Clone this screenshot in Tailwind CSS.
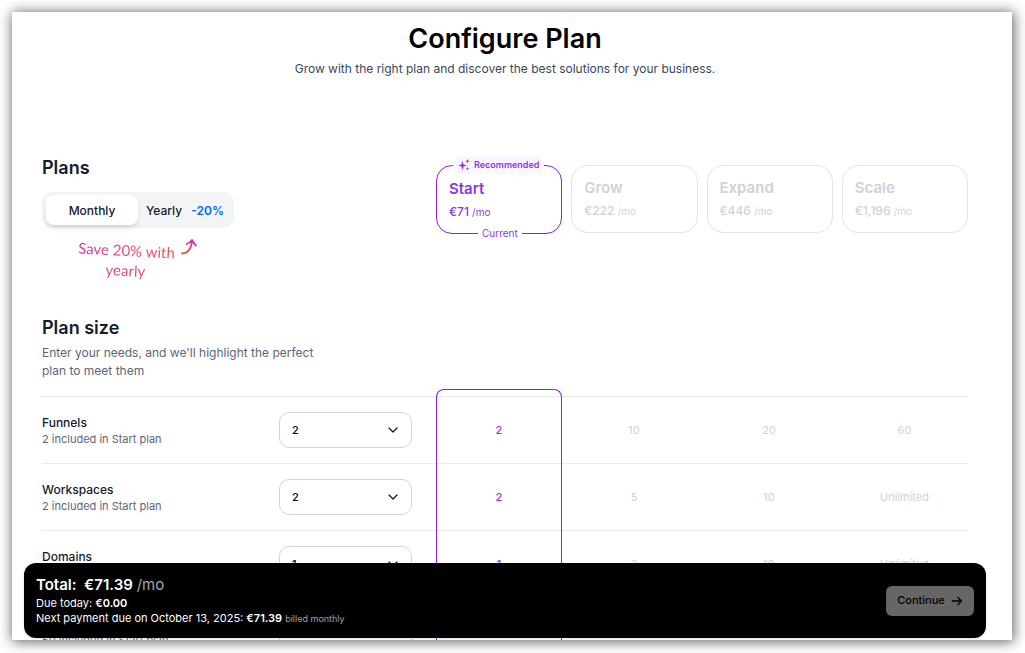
<!DOCTYPE html>
<html lang="en">
<head>
<meta charset="utf-8">
<meta name="viewport" content="width=device-width, initial-scale=1">
<title>Configure Plan</title>
<script src="https://cdn.jsdelivr.net/npm/@tailwindcss/browser@4"></script>
</head>
<body class="h-screen bg-white pt-3 pl-3 pr-[13px] pb-[13px] font-['Inter',sans-serif] text-[#141b2d]">
<div class="relative h-full overflow-hidden bg-white shadow-[1px_1px_12px_1px_rgba(0,0,0,0.6)]">
  <main class="pt-[9px] pl-[30px] pr-[44px]">
    <header class="text-center">
      <h1 class="text-[27px] leading-9 font-semibold text-black">Configure Plan</h1>
      <p class="mt-0.5 text-[12px] leading-5 text-[#3b4758]">Grow with the right plan and discover the best solutions for your business.</p>
    </header>

    <section class="mt-[75px] flex justify-between">
      <div>
        <h2 class="text-lg leading-7 font-semibold">Plans</h2>
        <div class="mt-[10px] flex h-9 w-48 items-center rounded-[10px] bg-[#f2f4f6] p-1">
          <button type="button" aria-pressed="true" class="h-[30px] w-[92px] rounded-lg bg-white pt-0.5 text-[12px] font-medium shadow-md shadow-black/10">Monthly</button>
          <button type="button" aria-pressed="false" class="flex flex-1 items-center justify-between pt-0.5 pr-1.5 pl-2 text-[12px] font-medium">Yearly <span class="font-semibold text-[#0068ff]">-20%</span></button>
        </div>
        <div class="mt-2 ml-8 flex">
          <p class="mt-1 w-[104px] rotate-3 bg-linear-to-r from-[#d42fb4] to-[#f9502f] bg-clip-text text-center font-['Lato',sans-serif] text-[15px] leading-5 text-transparent">Save 20% with yearly</p>
          <svg class="mt-0.5 ml-0.5 h-[18px] w-[18px]" viewBox="0 0 18 18" fill="none" stroke="url(#hint)" stroke-width="1.8" stroke-linecap="round" stroke-linejoin="round" aria-hidden="true">
            <defs><linearGradient id="hint" gradientUnits="userSpaceOnUse" x1="12" y1="1" x2="9" y2="14"><stop stop-color="#bd35c6"/><stop offset="1" stop-color="#f9502f"/></linearGradient></defs>
            <path d="M2 15.500C8 15 11.500 10 12 2.500M6.500 6C8.500 5.500 10.500 4 12 2C13 4 14.300 6 16 7.500"/>
          </svg>
        </div>
      </div>

      <div class="grid w-[532px] grid-cols-4 gap-[9px] pt-[11px] text-left">
        <button type="button" aria-pressed="true" class="relative flex h-[69px] flex-col rounded-2xl border border-[#8a1cf5] px-3 pt-[13px] text-left text-[#8e35ea]">
          <span class="absolute -top-[9px] left-[17px] flex h-4 items-center gap-1 rounded-full bg-[#faf5ff] px-1 text-[9px] font-semibold ring-1 ring-[#faf5ff]">
            <svg class="h-3 w-3" viewBox="0 0 12 12" fill="currentColor" aria-hidden="true"><path d="M4.500 2L5.600 5.400L9 6.500L5.600 7.600L4.500 11L3.400 7.600L0 6.500L3.400 5.400ZM9.500 0L10.100 1.600L11.700 2.200L10.100 2.800L9.500 4.400L8.900 2.800L7.300 2.200L8.900 1.600ZM9.500 7.800L10 9.200L11.400 9.700L10 10.200L9.500 11.600L9 10.200L7.600 9.700L9 9.200Z"/></svg>
            Recommended</span>
          <span class="text-[15px] leading-5 font-semibold">Start</span>
          <span class="mt-[3px] text-[12px] leading-5 font-medium">€71 <span class="text-[10px] font-normal">/mo</span></span>
          <span class="absolute -bottom-2 left-[41px] bg-white px-1 text-[10px] leading-4">Current</span>
        </button>
        <button type="button" class="flex h-[68px] flex-col rounded-2xl border border-[#e2e4e8] px-3 pt-3 text-left text-[#ced2d9]">
          <span class="text-[15px] leading-5 font-semibold">Grow</span>
          <span class="mt-[3px] text-[12px] leading-5 font-medium">€222 <span class="text-[10px] font-normal">/mo</span></span>
        </button>
        <button type="button" class="flex h-[68px] flex-col rounded-2xl border border-[#e2e4e8] px-3 pt-3 text-left text-[#ced2d9]">
          <span class="text-[15px] leading-5 font-semibold">Expand</span>
          <span class="mt-[3px] text-[12px] leading-5 font-medium">€446 <span class="text-[10px] font-normal">/mo</span></span>
        </button>
        <button type="button" class="flex h-[68px] flex-col rounded-2xl border border-[#e2e4e8] px-3 pt-3 text-left text-[#ced2d9]">
          <span class="text-[15px] leading-5 font-semibold">Scale</span>
          <span class="mt-[3px] text-[12px] leading-5 font-medium">€1,196 <span class="text-[10px] font-normal">/mo</span></span>
        </button>
      </div>
    </section>

    <section class="mt-[34px]">
      <h2 class="text-lg leading-7 font-semibold">Plan size</h2>
      <p class="mt-0.5 w-[290px] text-[12px] leading-[18px] text-[#5b6676]">Enter your needs, and we'll highlight the perfect plan to meet them</p>

      <div class="relative mt-4">
        <table class="w-full table-fixed border-separate border-spacing-0 text-[11px]">
          <colgroup><col><col class="w-[133px]"><col class="w-[20px]"><col class="w-[135px]"><col class="w-[135px]"><col class="w-[135px]"><col class="w-[131px]"></colgroup>
          <tbody class="text-center text-[#ced2d9] [&>tr>*]:h-[67px] [&>tr>*]:border-t [&>tr>*]:border-[#e8eaed]">
            <tr>
              <th scope="row" class="pt-0.5 text-left font-normal text-[#5b6676]"><label for="funnels" class="block text-[12px] leading-4 font-medium text-[#141b2d]">Funnels</label><span class="block leading-4">2 included in Start plan</span></th>
              <td><div class="relative"><select id="funnels" class="block h-9 w-full appearance-none rounded-[10px] border border-[#d0d4da] bg-white px-3 text-[11px] font-medium text-black"><option>2</option><option>10</option></select><svg class="pointer-events-none absolute top-3 right-[13px] h-3 w-3" viewBox="0 0 12 12" fill="none" stroke="#111" stroke-width="1.200" stroke-linecap="round" stroke-linejoin="round" aria-hidden="true"><path d="M2 4L6 8L10 4"/></svg></div></td>
              <td></td><td class="pr-[5px] pl-1 text-[#8e35ea] font-medium">2</td><td class="pr-[5px] pl-1">10</td><td class="pr-[5px] pl-1">20</td><td class="pl-1">60</td>
            </tr>
            <tr>
              <th scope="row" class="pt-0.5 text-left font-normal text-[#5b6676]"><label for="workspaces" class="block text-[12px] leading-4 font-medium text-[#141b2d]">Workspaces</label><span class="block leading-4">2 included in Start plan</span></th>
              <td><div class="relative"><select id="workspaces" class="block h-9 w-full appearance-none rounded-[10px] border border-[#d0d4da] bg-white px-3 text-[11px] font-medium text-black"><option>2</option><option>5</option></select><svg class="pointer-events-none absolute top-3 right-[13px] h-3 w-3" viewBox="0 0 12 12" fill="none" stroke="#111" stroke-width="1.200" stroke-linecap="round" stroke-linejoin="round" aria-hidden="true"><path d="M2 4L6 8L10 4"/></svg></div></td>
              <td></td><td class="pr-[5px] pl-1 text-[#8e35ea] font-medium">2</td><td class="pr-[5px] pl-1">5</td><td class="pr-[5px] pl-1">10</td><td class="pl-1">Unlimited</td>
            </tr>
            <tr>
              <th scope="row" class="pt-0.5 text-left font-normal text-[#5b6676]"><label for="domains" class="block text-[12px] leading-4 font-medium text-[#141b2d]">Domains</label><span class="block leading-4">1 included in Start plan</span></th>
              <td><div class="relative"><select id="domains" class="block h-9 w-full appearance-none rounded-[10px] border border-[#d0d4da] bg-white px-3 text-[11px] font-medium text-black"><option>1</option><option>3</option></select><svg class="pointer-events-none absolute top-3 right-[13px] h-3 w-3" viewBox="0 0 12 12" fill="none" stroke="#111" stroke-width="1.200" stroke-linecap="round" stroke-linejoin="round" aria-hidden="true"><path d="M2 4L6 8L10 4"/></svg></div></td>
              <td></td><td class="pr-[5px] pl-1 text-[#8e35ea] font-medium">1</td><td class="pr-[5px] pl-1">3</td><td class="pr-[5px] pl-1">10</td><td class="pl-1">Unlimited</td>
            </tr>
            <tr>
              <th scope="row" class="pt-0.5 text-left font-normal text-[#5b6676]"><label for="courses" class="block text-[12px] leading-4 font-medium text-[#141b2d]">Courses</label><span class="block leading-4">50 included in Start plan</span></th>
              <td><div class="relative"><select id="courses" class="block h-9 w-full appearance-none rounded-[10px] border border-[#d0d4da] bg-white px-3 text-[11px] font-medium text-black"><option>50</option></select></div></td>
              <td></td><td></td><td></td><td></td><td></td>
            </tr>
          </tbody>
        </table>
        <!-- outline of the selected plan's column -->
        <div class="pointer-events-none absolute -top-[7px] right-[406px] bottom-0 w-[126px] rounded-t-lg border border-b-0 border-[#8a1cf5]"></div>
      </div>
    </section>
  </main>

  <aside class="absolute right-[26px] bottom-0.5 left-3 flex items-center justify-between rounded-xl bg-black p-3 text-[11px] text-white shadow-sm">
    <div>
      <p class="text-[15px] leading-5 font-semibold">Total:&nbsp; €71.39 <span class="font-normal text-[#a5a7aa]">/mo</span></p>
      <p class="leading-4">Due today: <b class="font-semibold">€0.00</b></p>
      <p class="leading-[15px]">Next payment due on October 13, 2025: <b class="font-semibold">€71.39</b> <span class="text-[9px] text-[#9ca3af]">billed monthly</span></p>
    </div>
    <button type="button" class="flex h-[30px] w-[88px] items-center justify-center gap-1.5 rounded-md bg-[#666] text-[11px] font-medium text-black">Continue
      <svg class="h-3 w-3" viewBox="0 0 12 12" fill="none" stroke="currentColor" stroke-width="1.400" stroke-linecap="round" stroke-linejoin="round" aria-hidden="true"><path d="M1.500 6H10.500M7 2.500L10.500 6L7 9.500"/></svg>
    </button>
  </aside>
</div>
</body>
</html>
